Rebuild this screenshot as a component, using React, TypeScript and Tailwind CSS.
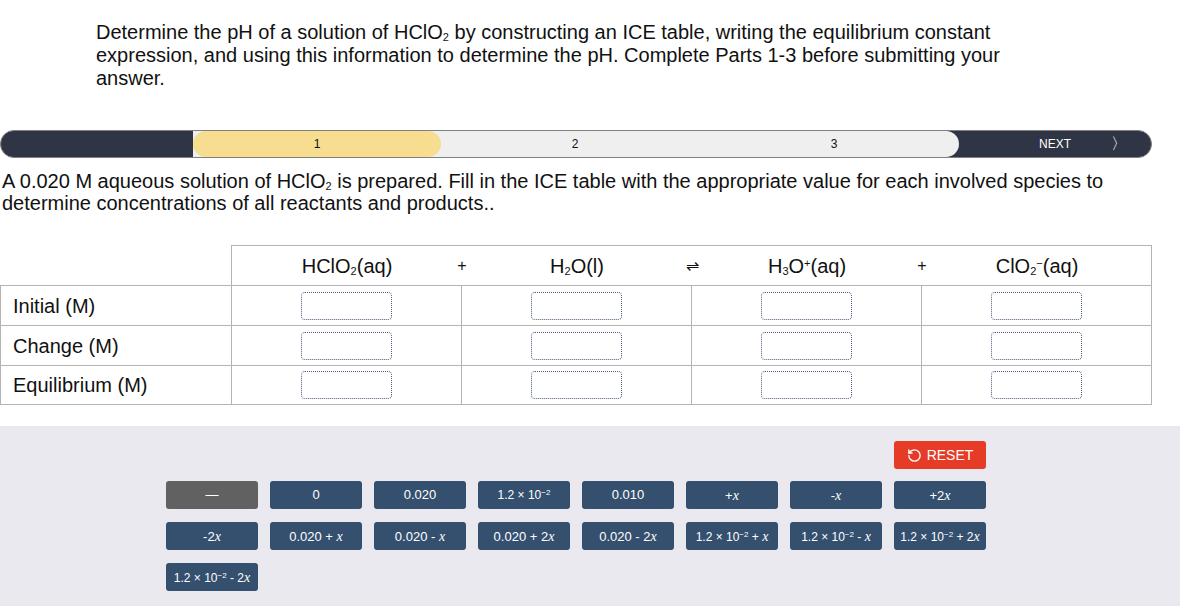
import { RotateCcw } from "lucide-react";
import type { ReactNode } from "react";

const font = { fontFamily: '"Liberation Sans", Arial, sans-serif' };

const X = () => <i className="font-['Liberation_Serif',serif] text-[14px]">x</i>;

const Sub = ({ children }: { children: ReactNode }) => (
  <span className="relative top-[2px] text-[11px] leading-none">{children}</span>
);

const Sup = ({ children }: { children: ReactNode }) => (
  <span className="relative top-[-6px] text-[11px] leading-none">{children}</span>
);

const Sci = () => (
  <>
    1.2 × 10<span className="relative top-[-4px] text-[8px] leading-none">−2</span>
  </>
);

const Blank = () => (
  <div className="h-[28px] w-[91px] rounded-[4px] border border-dotted border-[#4a5a78]" />
);

const Key = ({ children, gray, small }: { children: ReactNode; gray?: boolean; small?: boolean }) => (
  <button
    className={`flex h-[28px] w-[92px] items-center justify-center rounded-[3px] text-white ${
      small ? "text-[12px]" : "text-[13px]"
    } ${gray ? "bg-[#616161]" : "bg-[#35506f]"}`}
  >
    <span className="whitespace-pre">{children}</span>
  </button>
);

const rows = ["Initial (M)", "Change (M)", "Equilibrium (M)"];

export default function App() {
  return (
    <div className="h-[606px] w-[1180px] overflow-hidden bg-white text-[#111]" style={font}>
      <p className="w-[1010px] pl-[96px] pt-[21px] text-[20px] leading-[23px]">
        Determine the pH of a solution of HClO<Sub>2</Sub> by constructing an ICE table, writing the equilibrium
        constant expression, and using this information to determine the pH. Complete Parts 1-3 before submitting your
        answer.
      </p>

      <div className="mt-[40px] flex h-[28px] w-[1152px] items-stretch rounded-full border border-[#808080] bg-[#2f3545]">
        <div className="w-[192px]" />
        <div className="flex w-[766px] rounded-r-full bg-[#efefef]">
          <div className="flex w-[248px] items-center justify-center rounded-full bg-[#f6dd90] text-[12px]">1</div>
          <div className="flex w-[268px] items-center justify-center text-[12px]">2</div>
          <div className="flex w-[250px] items-center justify-center text-[12px]">3</div>
        </div>
        <div className="flex flex-1 items-center text-[12px] text-white">
          <span className="ml-[80px]">NEXT</span>
          <span className="ml-[40px] text-[16px] font-light">〉</span>
        </div>
      </div>

      <p className="mt-[12px] w-[1120px] pl-[2px] text-[20px] leading-[22px]">
        A 0.020 M aqueous solution of HClO<Sub>2</Sub> is prepared. Fill in the ICE table with the appropriate value
        for each involved species to determine concentrations of all reactants and products..
      </p>

      <div className="mt-[31px] w-[1152px] text-[20px]">
        <div className="flex h-[40px]">
          <div className="w-[231px]" />
          <div className="grid w-[921px] grid-cols-[57.5px_repeat(7,115px)_57.5px] items-center border border-b-0 border-[#b3b3b3] text-center">
            <div />
            <div className="whitespace-nowrap">
              HClO<Sub>2</Sub>(aq)
            </div>
            <div className="text-[16px]">+</div>
            <div className="whitespace-nowrap">
              H<Sub>2</Sub>O(l)
            </div>
            <div className="text-[16px]">⇌</div>
            <div className="whitespace-nowrap">
              H<Sub>3</Sub>O<Sup>+</Sup>(aq)
            </div>
            <div className="text-[16px]">+</div>
            <div className="whitespace-nowrap">
              ClO<Sub>2</Sub>
              <Sup>−</Sup>(aq)
            </div>
            <div />
          </div>
        </div>
        {rows.map((r, i) => (
          <div
            key={r}
            className={`flex h-[40px] border border-[#b3b3b3] ${i < rows.length - 1 ? "border-b-0" : ""}`}
          >
            <div className="flex w-[230px] items-center pl-[12px]">{r}</div>
            {[0, 1, 2, 3].map((c) => (
              <div key={c} className="flex w-[230px] items-center justify-center border-l border-[#b3b3b3]">
                <Blank />
              </div>
            ))}
          </div>
        ))}
      </div>

      <div className="mt-[21px] h-[200px] bg-[#eae9ef] pl-[166px] pt-[15px]">
        <div className="flex">
          <div className="w-[728px]" />
          <button className="flex h-[28px] w-[92px] items-center justify-center gap-[5px] rounded-[3px] bg-[#e53b27] text-[14px] text-white">
            <RotateCcw className="h-[15px] w-[15px]" strokeWidth={2.2} />
            RESET
          </button>
        </div>
        <div className="mt-[12px] grid w-[820px] grid-cols-[repeat(8,92px)] gap-x-[12px] gap-y-[13px]">
          <Key gray>—</Key>
          <Key>0</Key>
          <Key>0.020</Key>
          <Key small>
            <Sci />
          </Key>
          <Key>0.010</Key>
          <Key>
            +<X />
          </Key>
          <Key>
            -<X />
          </Key>
          <Key>
            +2<X />
          </Key>
          <Key>
            -2<X />
          </Key>
          <Key>
            {"0.020 + "}
            <X />
          </Key>
          <Key>
            {"0.020 - "}
            <X />
          </Key>
          <Key>
            {"0.020 + 2"}
            <X />
          </Key>
          <Key>
            {"0.020 - 2"}
            <X />
          </Key>
          <Key small>
            <Sci />
            {" + "}
            <X />
          </Key>
          <Key small>
            <Sci />
            {" - "}
            <X />
          </Key>
          <Key small>
            <Sci />
            {" + 2"}
            <X />
          </Key>
          <Key small>
            <Sci />
            {" - 2"}
            <X />
          </Key>
        </div>
      </div>
    </div>
  );
}
